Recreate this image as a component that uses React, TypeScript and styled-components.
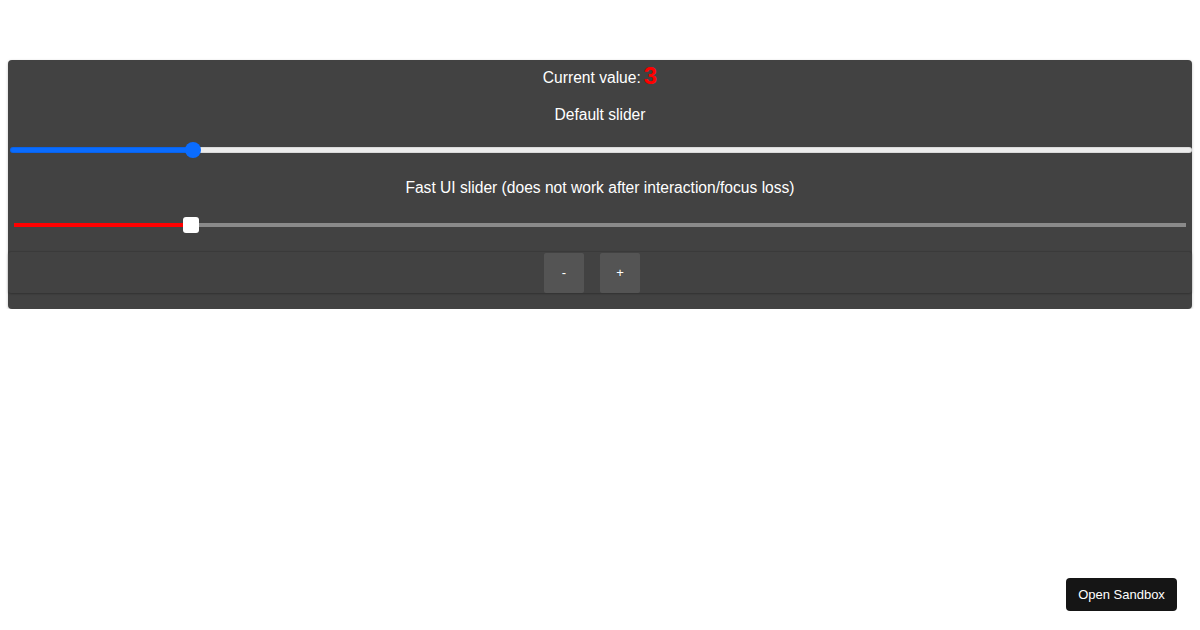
import React, { useState } from "react";
import styled, { createGlobalStyle } from "styled-components";

const GlobalStyle = createGlobalStyle`
  html, body {
    margin: 0;
    padding: 0;
    background: #ffffff;
    font-family: "Liberation Sans", Arial, sans-serif;
  }
  body {
    padding: 60px 8px 0;
  }
`;

const MIN = 0;
const MAX = 20;

const Panel = styled.div`
  background: #424242;
  border-radius: 4px;
  box-shadow: 0 1px 3px rgba(0, 0, 0, 0.25);
  color: #ffffff;
  padding-bottom: 16px;
  display: flex;
  flex-direction: column;
`;

const Title = styled.div`
  height: 32px;
  padding-top: 3px;
  box-sizing: border-box;
  display: flex;
  align-items: center;
  justify-content: center;
  font-size: 15.6px;
  gap: 3px;
`;

const Value = styled.span`
  color: #ff0000;
  font-size: 24px;
  font-weight: 700;
  margin-top: -4px;
`;

const Label = styled.div<{ $top: number }>`
  margin-top: ${({ $top }) => $top}px;
  height: 20px;
  line-height: 20px;
  font-size: 15.6px;
  text-align: center;
`;

const DefaultRange = styled.input`
  -webkit-appearance: none;
  appearance: none;
  margin: 17px 0 0 2px;
  width: calc(100% - 2px);
  height: 16px;
  background: transparent;
  outline: none;

  &::-webkit-slider-runnable-track {
    height: 6px;
    border-radius: 3px;
    background: linear-gradient(
      to right,
      #0a6cff 0%,
      #0a6cff var(--fill),
      #ececec var(--fill),
      #ececec 100%
    );
    box-shadow: inset 0 0 0 1px rgba(0, 0, 0, 0.08);
  }

  &::-webkit-slider-thumb {
    -webkit-appearance: none;
    width: 16px;
    height: 16px;
    border-radius: 50%;
    background: #0a6cff;
    margin-top: -5px;
  }
`;

const FastSlider = styled.div`
  margin: 19px 6px 0;
  height: 16px;
  position: relative;
  display: flex;
  align-items: center;
`;

const FastTrack = styled.div`
  flex: 1;
  height: 4px;
  background: #8a8a8a;
  position: relative;
`;

const FastFill = styled.div`
  position: absolute;
  left: 0;
  top: 0;
  bottom: 0;
  background: #ff0000;
`;

const FastThumb = styled.div`
  position: absolute;
  top: 0;
  width: 16px;
  height: 16px;
  margin-left: -7px;
  border-radius: 3px;
  background: #ffffff;
`;

const Toolbar = styled.div`
  margin-top: 19px;
  height: 41px;
  border-radius: 3px;
  box-shadow: 0 -1px 1px rgba(0, 0, 0, 0.12), 0 1px 2px rgba(0, 0, 0, 0.25);
  display: flex;
  justify-content: center;
  align-items: center;
`;

const StepButton = styled.button`
  width: 40px;
  height: 40px;
  margin-right: 16px;
  border: none;
  border-radius: 2px;
  background: #545454;
  color: #ffffff;
  font-family: "Liberation Sans", Arial, sans-serif;
  font-size: 13px;
  cursor: pointer;
  padding: 0;
`;

const SandboxButton = styled.button`
  position: fixed;
  right: 23px;
  bottom: 19px;
  width: 111px;
  height: 33px;
  border: none;
  border-radius: 4px;
  background: #151515;
  color: #ffffff;
  font-family: "Liberation Sans", Arial, sans-serif;
  font-size: 13px;
  cursor: pointer;
`;

export default function App() {
  const [value, setValue] = useState(3);
  const pct = ((value - MIN) / (MAX - MIN)) * 100;
  const clamp = (v: number) => Math.max(MIN, Math.min(MAX, v));

  return (
    <>
      <GlobalStyle />
      <Panel>
        <Title>
          Current value: <Value>{value}</Value>
        </Title>
        <Label $top={13}>Default slider</Label>
        <DefaultRange
          type="range"
          min={MIN}
          max={MAX}
          value={value}
          onChange={(e) => setValue(Number(e.target.value))}
          style={{ ["--fill" as string]: `${pct}%` } as React.CSSProperties}
        />
        <Label $top={20}>
          Fast UI slider (does not work after interaction/focus loss)
        </Label>
        <FastSlider>
          <FastTrack>
            <FastFill style={{ width: `${pct}%` }} />
          </FastTrack>
          <FastThumb style={{ left: `${pct}%` }} />
        </FastSlider>
        <Toolbar>
          <StepButton onClick={() => setValue((v) => clamp(v - 1))}>-</StepButton>
          <StepButton onClick={() => setValue((v) => clamp(v + 1))}>+</StepButton>
        </Toolbar>
      </Panel>
      <SandboxButton>Open Sandbox</SandboxButton>
    </>
  );
}
